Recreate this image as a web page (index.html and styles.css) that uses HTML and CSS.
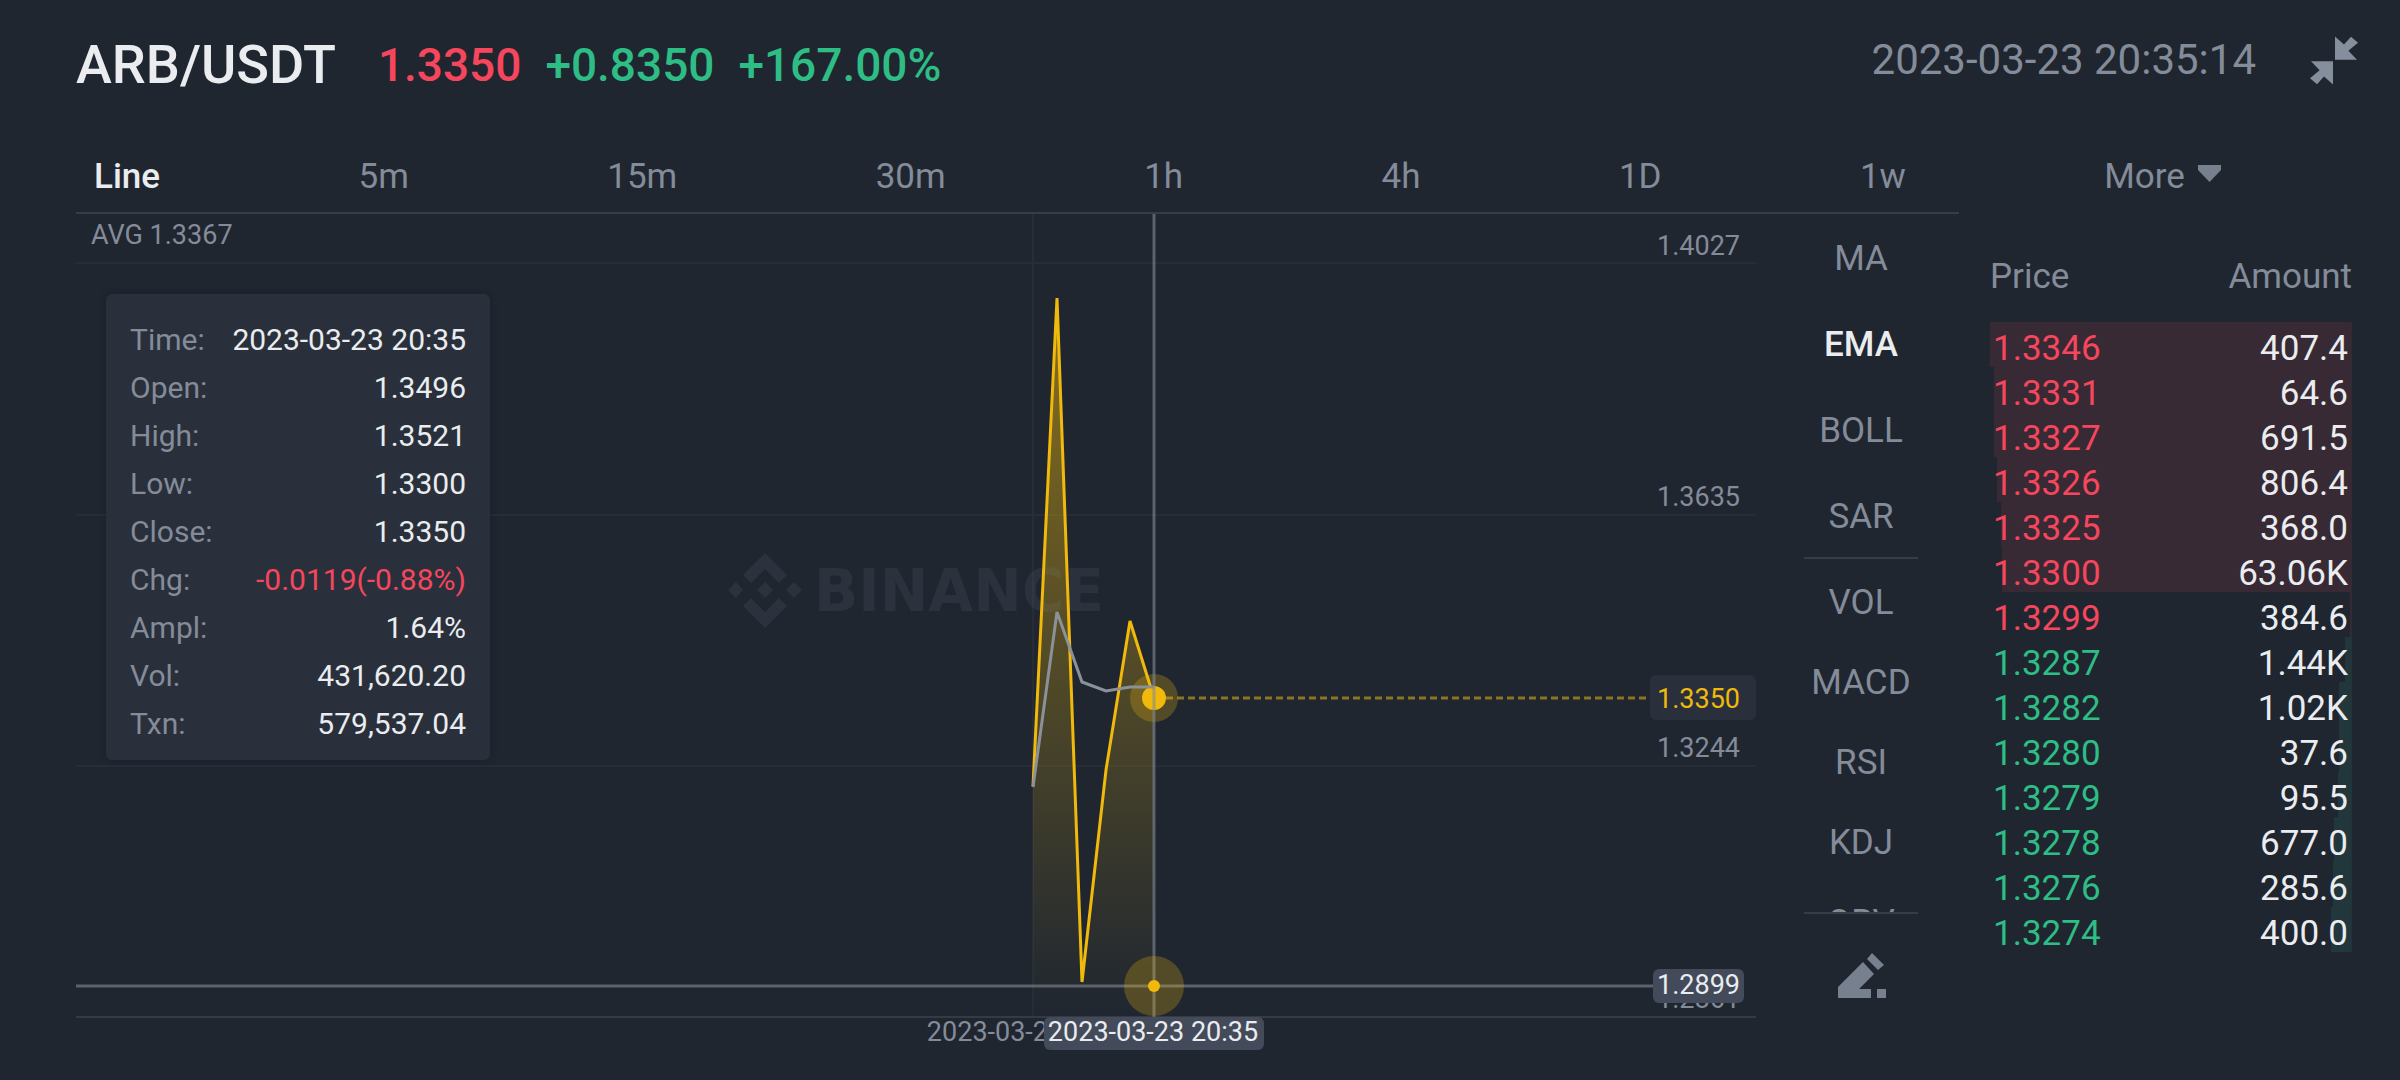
FILE: index.html
```html
<!DOCTYPE html>
<html lang="en">

<head>
    <meta charset="UTF-8">
    <meta name="viewport" content="width=device-width, initial-scale=1.0">
    <title>ARB/USDT</title>
    <link rel="stylesheet" href="styles.css">
</head>

<body>
    <header class="header">
        <div class="ticker">
            <h1>ARB/USDT</h1>
            <div class="quote">
                <span class="red">1.3350</span>
                <span class="green">+0.8350</span>
                <span class="green">+167.00%</span>
            </div>
        </div>
        <div class="clock">
            <time datetime="2023-03-23T20:35:14">2023-03-23 20:35:14</time>
            <button type="button" class="icon-button" aria-label="Exit full screen">
                <svg width="48" height="49" viewBox="0 0 48 49">
                    <path d="M25 0.5L34 8.5L41 0.7L48 6.7L38.4 14.7L47 23.7H25Z" />
                    <path d="M23 48.5L14 40.5L7 48.3L0 42.3L9.6 34.3L1 25.3H23Z" />
                </svg>
            </button>
        </div>
    </header>

    <nav class="tabs">
        <button type="button" class="active">Line</button>
        <button type="button">5m</button>
        <button type="button">15m</button>
        <button type="button">30m</button>
        <button type="button">1h</button>
        <button type="button">4h</button>
        <button type="button">1D</button>
        <button type="button">1w</button>
        <button type="button" class="more">More
            <svg width="23" height="17" viewBox="0 0 23 17">
                <path d="M0 0H23V5L11.5 17L0 5Z" />
            </svg>
        </button>
    </nav>

    <main class="main">
        <section class="panel">
            <div class="chart">
                <svg class="plot" viewBox="0 0 1680 840">
                    <defs>
                        <linearGradient id="area" gradientUnits="userSpaceOnUse" x1="0" y1="84" x2="0" y2="803">
                            <stop offset="0" stop-color="#f0b90b" stop-opacity="0.5" />
                            <stop offset="1" stop-color="#f0b90b" stop-opacity="0" />
                        </linearGradient>
                    </defs>

                    <!-- grid -->
                    <path class="grid" d="M0 49H1680M0 301H1680M0 552H1680M957 0V803" />
                    <path class="axis" d="M0 803H1680" />

                    <path class="area" d="M957 572L981 84L1006 768L1030 556L1054 407L1078 484V803H957Z" />

                    <!-- watermark -->
                    <g class="watermark">
                        <path d="M689 339L711 361L703 369L689 355L675 369L667 361Z" />
                        <path d="M689 414L711 392L703 384L689 398L675 384L667 392Z" />
                        <path d="M689 368L697 376L689 384L681 376Z" />
                        <path d="M660 368L667 376L660 384L652 376Z" />
                        <path d="M718 368L726 376L718 384L710 376Z" />
                        <text x="738" y="397">BINANCE</text>
                    </g>

                    <!-- last price -->
                    <path class="last" d="M1090 484H1574" />
                    <circle class="halo" cx="1078" cy="484" r="24" />
                    <path class="line" d="M957 572L981 84L1006 768L1030 556L1054 407L1078 484" />
                    <circle class="dot" cx="1078" cy="484" r="12" />
                    <path class="avg-line" d="M957 573L981 398L1006 468L1030 477L1054 473H1078" />

                    <text class="label" x="15" y="30">AVG 1.3367</text>
                    <text class="label end" x="1664" y="41">1.4027</text>
                    <text class="label end" x="1664" y="292">1.3635</text>
                    <text class="label end" x="1664" y="543">1.3244</text>
                    <text class="label end" x="1664" y="794">1.2861</text>
                    <text class="label middle" x="956" y="827">2023-03-23 20:30</text>

                    <rect class="last-box" x="1574" y="461" width="106" height="45" rx="6" />
                    <text class="label end yellow" x="1664" y="494">1.3350</text>

                    <!-- crosshair -->
                    <path class="cross" d="M1078 0V803M0 772H1577" />
                    <circle class="halo" cx="1078" cy="772" r="30" />
                    <circle class="dot" cx="1078" cy="772" r="6" />
                    <rect class="cross-box" x="1577" y="755" width="91" height="34" rx="6" />
                    <text class="label end white" x="1664" y="780">1.2899</text>
                    <rect class="cross-box" x="968" y="803" width="220" height="33" rx="6" />
                    <text class="label middle white" x="1077" y="827">2023-03-23 20:35</text>
                </svg>

                <dl class="tooltip">
                    <div><dt>Time:</dt><dd>2023-03-23 20:35</dd></div>
                    <div><dt>Open:</dt><dd>1.3496</dd></div>
                    <div><dt>High:</dt><dd>1.3521</dd></div>
                    <div><dt>Low:</dt><dd>1.3300</dd></div>
                    <div><dt>Close:</dt><dd>1.3350</dd></div>
                    <div><dt>Chg:</dt><dd class="red">-0.0119(-0.88%)</dd></div>
                    <div><dt>Ampl:</dt><dd>1.64%</dd></div>
                    <div><dt>Vol:</dt><dd>431,620.20</dd></div>
                    <div><dt>Txn:</dt><dd>579,537.04</dd></div>
                </dl>
            </div>

            <aside class="indicators">
                <div class="group">
                    <button type="button">MA</button>
                    <button type="button" class="active">EMA</button>
                    <button type="button">BOLL</button>
                    <button type="button">SAR</button>
                </div>
                <div class="group sub">
                    <button type="button">VOL</button>
                    <button type="button">MACD</button>
                    <button type="button">RSI</button>
                    <button type="button">KDJ</button>
                    <button type="button">OBV</button>
                </div>
                <button type="button" class="icon-button" aria-label="Draw">
                    <svg width="49" height="46" viewBox="0 0 49 46">
                        <path d="M1 34L26 9L37 21L22 36H34V45H1Z" />
                        <path d="M35 0L47 12L41 17L30 6Z" />
                        <path d="M40 36H49V45H40Z" />
                    </svg>
                </button>
            </aside>
        </section>

        <table class="book">
            <thead>
                <tr><th>Price</th><th>Amount</th></tr>
            </thead>
            <tbody class="asks">
                <tr style="--depth: 100%"><td>1.3346</td><td>407.4</td></tr>
                <tr style="--depth: 99%"><td>1.3331</td><td>64.6</td></tr>
                <tr style="--depth: 99%"><td>1.3327</td><td>691.5</td></tr>
                <tr style="--depth: 98%"><td>1.3326</td><td>806.4</td></tr>
                <tr style="--depth: 97%"><td>1.3325</td><td>368.0</td></tr>
                <tr style="--depth: 96.6%"><td>1.3300</td><td>63.06K</td></tr>
                <tr style="--depth: 0.6%"><td>1.3299</td><td>384.6</td></tr>
            </tbody>
            <tbody class="bids">
                <tr style="--depth: 2%"><td>1.3287</td><td>1.44K</td></tr>
                <tr style="--depth: 3.6%"><td>1.3282</td><td>1.02K</td></tr>
                <tr style="--depth: 3.6%"><td>1.3280</td><td>37.6</td></tr>
                <tr style="--depth: 3.9%"><td>1.3279</td><td>95.5</td></tr>
                <tr style="--depth: 5%"><td>1.3278</td><td>677.0</td></tr>
                <tr style="--depth: 5.2%"><td>1.3276</td><td>285.6</td></tr>
                <tr style="--depth: 5.8%"><td>1.3274</td><td>400.0</td></tr>
            </tbody>
        </table>
    </main>
</body>

</html>
```
FILE: styles.css
```css
* {
    box-sizing: border-box;
}

body {
    margin: 0;
    background-color: #1f2630;
    color: #eaecef;
    font-family: Roboto, "Liberation Sans", sans-serif;
    font-size: 35px;
}

button {
    padding: 0;
    border: none;
    background: none;
    color: #848b99;
    font: inherit;
    cursor: pointer;
}

button.active {
    color: #eaecef;
    font-weight: 500;
}

.icon-button svg {
    display: block;
    fill: #848e9c;
}

.red {
    color: #f6465d;
}

.green {
    color: #2ebd85;
}

/* header */

.header {
    display: flex;
    justify-content: space-between;
    align-items: flex-start;
    padding: 24px 42px 0 76px;
}

.ticker,
.quote,
.clock {
    display: flex;
    align-items: center;
}

.ticker {
    gap: 42px;
    line-height: 82px;
}

.ticker h1 {
    margin: 0;
    font-size: 54px;
    font-weight: 500;
}

.quote {
    gap: 24px;
    font-size: 46px;
    font-weight: 500;
}

.clock {
    gap: 54px;
    color: #848b99;
    font-size: 42px;
    line-height: 72px;
}

/* intervals */

.tabs {
    display: flex;
    justify-content: space-between;
    padding: 53px 179px 17px 94px;
    line-height: 36px;
}

.tabs .more {
    display: flex;
    gap: 13px;
}

.more svg {
    margin-top: 6px;
    fill: #76808f;
}

/* chart */

.main {
    display: flex;
    align-items: flex-start;
    gap: 31px;
    padding: 0 48px 0 76px;
}

.panel {
    flex: 1;
    display: flex;
    gap: 48px;
    padding-right: 41px;
    border-top: 2px solid #363d48;
}

.chart {
    position: relative;
    flex: 1;
}

.plot {
    display: block;
    width: 100%;
}

.plot path {
    fill: none;
}

.plot .grid {
    stroke: #262d37;
    stroke-width: 2;
}

.plot .axis {
    stroke: #343b45;
    stroke-width: 2;
}

.plot .area {
    fill: url(#area);
}

.plot .watermark path,
.plot .watermark text {
    fill: #848e9c;
    fill-opacity: 0.12;
}

.watermark text {
    font-family: "DejaVu Sans", sans-serif;
    font-size: 58px;
    font-weight: 700;
}

.plot .line {
    stroke: #f0b90b;
    stroke-width: 3;
}

.plot .avg-line {
    stroke: #8b9199;
    stroke-width: 3;
}

.plot .last {
    stroke: #8c7423;
    stroke-width: 3;
    stroke-dasharray: 7 4;
}

.plot .cross {
    stroke: #828a96;
    stroke-opacity: 0.6;
    stroke-width: 3;
}

.dot {
    fill: #f0b90b;
}

.halo {
    fill: #f0b90b;
    fill-opacity: 0.25;
}

.last-box {
    fill: #29303b;
}

.cross-box {
    fill: #434b5a;
}

.label {
    fill: #848b99;
    font-size: 27px;
}

.label.end {
    text-anchor: end;
}

.label.middle {
    text-anchor: middle;
}

.label.yellow {
    fill: #f0b90b;
}

.label.white {
    fill: #eaecef;
}

.tooltip {
    position: absolute;
    top: 80px;
    left: 30px;
    width: 384px;
    margin: 0;
    padding: 22px 24px 12px;
    border-radius: 6px;
    background-color: #29303b;
    box-shadow: 0 0 8px rgba(0, 0, 0, 0.2);
    font-size: 30px;
    line-height: 48px;
}

.tooltip div {
    display: flex;
    justify-content: space-between;
}

.tooltip dt {
    color: #848b99;
}

.tooltip dd {
    margin: 0;
}

/* indicators */

.indicators {
    width: 114px;
    text-align: center;
    line-height: 40px;
}

.group {
    display: flex;
    flex-direction: column;
    align-items: center;
    gap: 46px;
    padding: 25px 0 20px;
    border-bottom: 2px solid #363d48;
}

.group.sub {
    gap: 40px;
    height: 355px;
    padding: 24px 0 0;
    overflow: hidden;
}

.group button {
    flex-shrink: 0;
    line-height: 40px;
}

.indicators .icon-button {
    margin-top: 39px;
}

.indicators .icon-button svg {
    fill: #76808f;
}

/* order book */

.book {
    width: 362px;
    border-collapse: collapse;
}

.book th {
    height: 110px;
    padding: 18px 0 0;
    color: #848b99;
    font-weight: 400;
    text-align: left;
}

.book td {
    height: 45px;
    padding: 9px 4px 0 3px;
    line-height: 36px;
    vertical-align: bottom;
}

.book th:last-child,
.book td:last-child {
    text-align: right;
}

.asks td:first-child {
    color: #f6465d;
}

.bids td:first-child {
    color: #2ebd85;
}

.asks tr {
    background: linear-gradient(to left, #372a34 var(--depth), transparent 0);
}

.bids tr {
    background: linear-gradient(to left, #21373b var(--depth), transparent 0);
}
```
